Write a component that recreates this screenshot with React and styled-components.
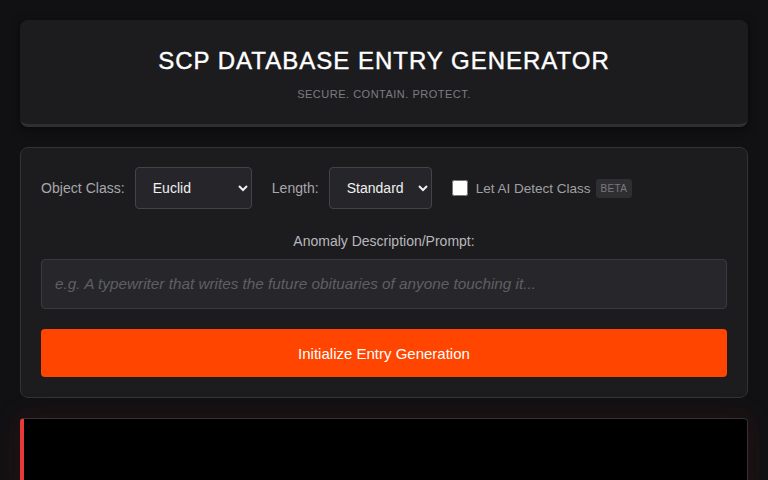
import React, { useState } from "react"
import styled, { createGlobalStyle } from "styled-components"

const GlobalStyle = createGlobalStyle`
  html, body {
    margin: 0;
    padding: 0;
    background: #111113;
    color: #e0e0e0;
    font-family: "Liberation Sans", Arial, sans-serif;
  }
  * { box-sizing: border-box; }
`

export default function App() {
  const [objectClass, setObjectClass] = useState("Euclid")
  const [length, setLength] = useState("Standard")
  const [autoDetect, setAutoDetect] = useState(false)
  const [prompt, setPrompt] = useState("")

  return (
    <Page>
      <GlobalStyle />
      <Header>
        <Title>SCP DATABASE ENTRY GENERATOR</Title>
        <Subtitle>SECURE. CONTAIN. PROTECT.</Subtitle>
      </Header>

      <FormCard>
        <ControlsRow>
          <Field>
            <Label htmlFor="object-class">Object Class:</Label>
            <Select
              id="object-class"
              width={117}
              value={objectClass}
              onChange={e => setObjectClass(e.target.value)}
            >
              <option>Safe</option>
              <option>Euclid</option>
              <option>Keter</option>
              <option>Thaumiel</option>
            </Select>
          </Field>
          <Field>
            <Label htmlFor="length">Length:</Label>
            <Select
              id="length"
              width={103}
              value={length}
              onChange={e => setLength(e.target.value)}
            >
              <option>Short</option>
              <option>Standard</option>
              <option>Long</option>
            </Select>
          </Field>
          <CheckField>
            <Checkbox
              type="checkbox"
              checked={autoDetect}
              onChange={e => setAutoDetect(e.target.checked)}
            />
            <CheckLabel>Let AI Detect Class</CheckLabel>
            <Badge>BETA</Badge>
          </CheckField>
        </ControlsRow>

        <PromptLabel htmlFor="prompt">Anomaly Description/Prompt:</PromptLabel>
        <PromptInput
          id="prompt"
          placeholder="e.g. A typewriter that writes the future obituaries of anyone touching it..."
          value={prompt}
          onChange={e => setPrompt(e.target.value)}
        />

        <GenerateButton>Initialize Entry Generation</GenerateButton>
      </FormCard>

      <Output />
    </Page>
  )
}

const Page = styled.div`
  padding: 20px;
  display: flex;
  flex-direction: column;
  gap: 20px;
  height: 480px;
  overflow: hidden;
`

const Header = styled.header`
  flex: 0 0 auto;
  background: #1c1c1f;
  border-radius: 8px;
  border-bottom: 3px solid #2f2f32;
  box-shadow: 0 2px 8px rgba(0, 0, 0, 0.5);
  padding: 27px 20px 23px;
  text-align: center;
`

const Title = styled.h1`
  margin: 0;
  font-family: "Liberation Sans", Arial, sans-serif;
  font-size: 24px;
  font-weight: 400;
  letter-spacing: 1px;
  color: #ffffff;
  line-height: 28px;
  -webkit-text-stroke: 0.4px #ffffff;
`

const Subtitle = styled.p`
  margin: 12px 0 0;
  font-size: 11px;
  letter-spacing: 0.5px;
  color: #7c7c80;
  line-height: 14px;
`

const FormCard = styled.section`
  flex: 0 0 auto;
  background: #1c1c1f;
  border: 1px solid #333336;
  border-radius: 8px;
  padding: 19px 20px 20px;
  display: flex;
  flex-direction: column;
`

const ControlsRow = styled.div`
  display: flex;
  align-items: center;
  gap: 20px;
`

const Field = styled.div`
  display: flex;
  align-items: center;
  gap: 10px;
`

const Label = styled.label`
  font-size: 14px;
  letter-spacing: 0.04px;
  color: #a8a8ac;
`

const Select = styled.select`
  width: ${p => p.width}px;
  height: 42px;
  padding: 0 10px 0 13px;
  background: #26262a;
  color: #f0f0f0;
  border: 1px solid #444448;
  border-radius: 4px;
  font-family: "Liberation Sans", Arial, sans-serif;
  font-size: 14px;
  color-scheme: dark;
`

const CheckField = styled.label`
  display: flex;
  align-items: center;
  gap: 7px;
`

const Checkbox = styled.input`
  width: 16px;
  height: 16px;
  margin: 0 1px 0 0;
`

const CheckLabel = styled.span`
  font-size: 13.5px;
  color: #a0a0a4;
`

const Badge = styled.span`
  background: #2f2f32;
  color: #7a7a7e;
  font-size: 10px;
  letter-spacing: 0.3px;
  padding: 4px 5px;
  border-radius: 3px;
  margin-left: -2px;
`

const PromptLabel = styled.label`
  margin-top: 24px;
  text-align: center;
  font-size: 14px;
  color: #b8b8bc;
`

const PromptInput = styled.input`
  margin-top: 10px;
  height: 50px;
  padding: 0 13px;
  background: #27272b;
  border: 1px solid #3a3a3e;
  border-radius: 4px;
  color: #e0e0e0;
  font-family: "Liberation Sans", Arial, sans-serif;
  font-size: 15.3px;
  outline: none;

  &::placeholder {
    color: #5f5f64;
    font-style: italic;
  }
`

const GenerateButton = styled.button`
  margin-top: 20px;
  height: 48px;
  border: none;
  border-radius: 4px;
  background: #ff4500;
  color: #ffffff;
  font-family: "Liberation Sans", Arial, sans-serif;
  font-size: 15px;
  cursor: pointer;
`

const Output = styled.div`
  flex: 1 0 80px;
  background: #000000;
  border: 1px solid #333336;
  border-left: 4px solid #e63a3a;
  border-radius: 4px;
  box-shadow: 0 0 24px rgba(120, 20, 20, 0.25);
`
